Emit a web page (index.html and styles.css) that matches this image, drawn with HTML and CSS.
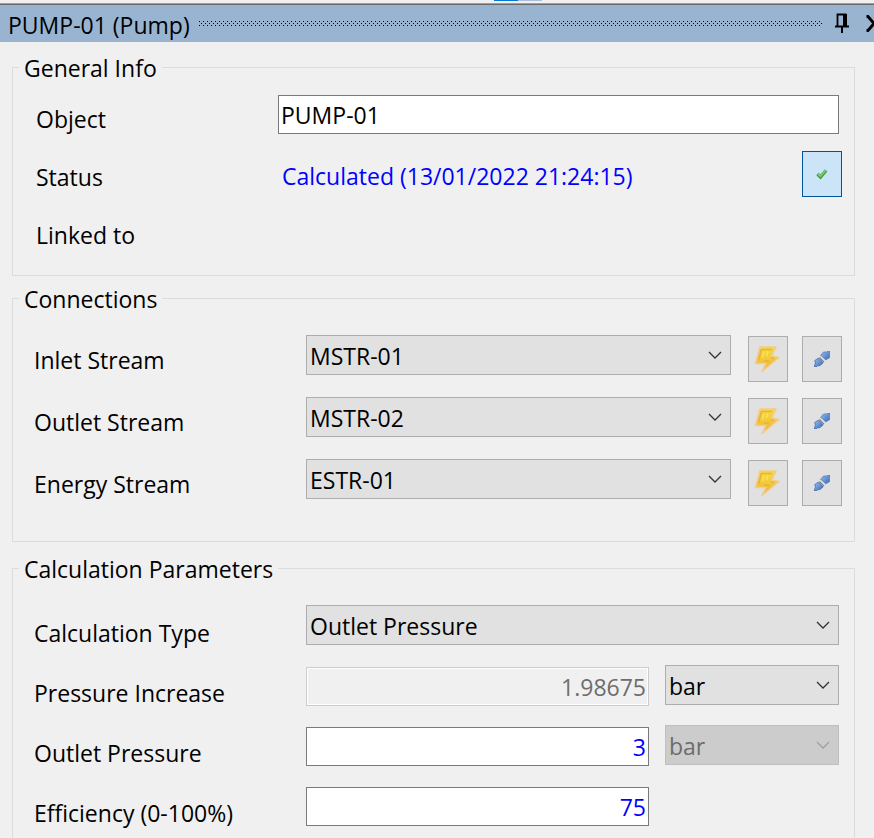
FILE: index.html
```html
<!DOCTYPE html>
<html lang="en">
<head>
    <meta charset="UTF-8">
    <meta name="viewport" content="width=device-width, initial-scale=1.0">
    <title>PUMP-01 (Pump)</title>
    <link rel="stylesheet" href="styles.css">
</head>
<body>
    <svg class="defs" aria-hidden="true">
        <defs>
            <linearGradient id="boltFill" x1="0" y1="0" x2="0" y2="1">
                <stop offset="0" stop-color="#f6da45"/>
                <stop offset="0.5" stop-color="#f2c936"/>
                <stop offset="1" stop-color="#e8a94a"/>
            </linearGradient>
            <linearGradient id="plugFill" x1="0" y1="0" x2="1" y2="1">
                <stop offset="0" stop-color="#9cc0ee"/>
                <stop offset="1" stop-color="#3766b4"/>
            </linearGradient>
            <symbol id="bolt" viewBox="0 0 26 28">
                <path d="M6 2H22L17.500 11L25 12.500L8 26.500L12 18.500H1.500Z" fill="url(#boltFill)" stroke="#f1cc8c" stroke-width="1.600" stroke-linejoin="round"/>
                <path d="M7.500 4L4.500 15M7.500 4.500H18M10 16H15M17 13L20 13.500" stroke="#eab040" stroke-width="1.500" fill="none"/>
                <path d="M10 7L8.500 12.500M14 6.500L12.500 11" stroke="#f8e35c" stroke-width="1.500" fill="none"/>
            </symbol>
            <symbol id="plug" viewBox="0 0 16 16">
                <path d="M6.500 4.500L9.500 1L13 1L14 0H16V2L15.500 3L15.800 6.500L11.500 9Z" fill="url(#plugFill)" stroke="#5280c4" stroke-width="0.800"/>
                <path d="M4.500 7L9 12L6 14.500L3 15L2 16H0.500V14L1.500 13L0.800 9.500Z" fill="url(#plugFill)" stroke="#3f6db4" stroke-width="0.800"/>
                <path d="M5.500 6.500L10 11.200" stroke="#858585" stroke-width="1.600"/>
                <path d="M6.500 5.300L11.200 10" stroke="#e8e8e8" stroke-width="1.200"/>
            </symbol>
        </defs>
    </svg>

    <div class="panel">
        <div class="tab-strip"><span class="tab-active"></span><span class="tab-next"></span></div>

        <header class="title-bar">
            <h1>PUMP-01 (Pump)</h1>
            <div class="grip"></div>
            <button type="button" class="title-btn" aria-label="Auto hide">
                <svg width="16" height="22" viewBox="0 0 16 22">
                    <path d="M3.500 14V1.500H11.500V14" fill="none" stroke="#000" stroke-width="1.800"/>
                    <path d="M9 1H13V13H9ZM1 12.500H15V14.500H1ZM7 14H9V20H7Z" fill="#000"/>
                </svg>
            </button>
            <button type="button" class="title-btn close-btn" aria-label="Close">
                <svg width="16" height="18" viewBox="0 0 16 18">
                    <path d="M0.500 1.500H2L14 15.500H15.500M15.500 1.500H14L2 15.500H0.500" fill="none" stroke="#000" stroke-width="2.800"/>
                </svg>
            </button>
        </header>

        <form class="content">
            <fieldset class="general">
                <legend>General Info</legend>
                <div class="row">
                    <label for="object">Object</label>
                    <input type="text" id="object" value="PUMP-01">
                </div>
                <div class="row">
                    <span class="label">Status</span>
                    <output class="status">Calculated (13/01/2022 21:24:15)</output>
                    <button type="button" class="icon-btn active" aria-label="Object active">
                        <svg width="12" height="12" viewBox="0 0 12 12">
                            <path d="M1.500 6L4.500 9L10 2.500" fill="none" stroke="#3f9a3a" stroke-width="3.400"/>
                            <path d="M1.500 5.500L4.500 8.200L9.800 2.200" fill="none" stroke="#7cc873" stroke-width="1.800"/>
                        </svg>
                    </button>
                </div>
                <div class="row">
                    <span class="label">Linked to</span>
                </div>
            </fieldset>

            <fieldset class="connections">
                <legend>Connections</legend>
                <div class="row">
                    <label for="inlet">Inlet Stream</label>
                    <div class="select"><select id="inlet"><option>MSTR-01</option></select><svg class="arrow" viewBox="0 0 14 8"><path d="M1 1L7 7L13 1"/></svg></div>
                    <button type="button" class="icon-btn" aria-label="Create inlet stream"><svg width="26" height="28"><use href="#bolt"/></svg></button>
                    <button type="button" class="icon-btn" aria-label="Disconnect inlet stream"><svg width="16" height="16"><use href="#plug"/></svg></button>
                </div>
                <div class="row">
                    <label for="outlet">Outlet Stream</label>
                    <div class="select"><select id="outlet"><option>MSTR-02</option></select><svg class="arrow" viewBox="0 0 14 8"><path d="M1 1L7 7L13 1"/></svg></div>
                    <button type="button" class="icon-btn" aria-label="Create outlet stream"><svg width="26" height="28"><use href="#bolt"/></svg></button>
                    <button type="button" class="icon-btn" aria-label="Disconnect outlet stream"><svg width="16" height="16"><use href="#plug"/></svg></button>
                </div>
                <div class="row">
                    <label for="energy">Energy Stream</label>
                    <div class="select"><select id="energy"><option>ESTR-01</option></select><svg class="arrow" viewBox="0 0 14 8"><path d="M1 1L7 7L13 1"/></svg></div>
                    <button type="button" class="icon-btn" aria-label="Create energy stream"><svg width="26" height="28"><use href="#bolt"/></svg></button>
                    <button type="button" class="icon-btn" aria-label="Disconnect energy stream"><svg width="16" height="16"><use href="#plug"/></svg></button>
                </div>
            </fieldset>

            <fieldset class="parameters">
                <legend>Calculation Parameters</legend>
                <div class="row">
                    <label for="calcType">Calculation Type</label>
                    <div class="select"><select id="calcType"><option>Outlet Pressure</option></select><svg class="arrow" viewBox="0 0 14 8"><path d="M1 1L7 7L13 1"/></svg></div>
                </div>
                <div class="row">
                    <label for="increase">Pressure Increase</label>
                    <input type="text" id="increase" class="value" value="1.98675" disabled>
                    <div class="select unit"><select aria-label="Pressure increase unit"><option>bar</option></select><svg class="arrow" viewBox="0 0 14 8"><path d="M1 1L7 7L13 1"/></svg></div>
                </div>
                <div class="row">
                    <label for="pressure">Outlet Pressure</label>
                    <input type="text" id="pressure" class="value" value="3">
                    <div class="select unit"><select aria-label="Outlet pressure unit" disabled><option>bar</option></select><svg class="arrow" viewBox="0 0 14 8"><path d="M1 1L7 7L13 1"/></svg></div>
                </div>
                <div class="row">
                    <label for="efficiency">Efficiency (0-100%)</label>
                    <input type="text" id="efficiency" class="value" value="75">
                    <div class="unit"></div>
                </div>
            </fieldset>
        </form>
    </div>
</body>
</html>
```
FILE: styles.css
```css
* {
    margin: 0;
    padding: 0;
    box-sizing: border-box;
}

body {
    font-family: 'Segoe UI', 'Open Sans', 'Noto Sans', sans-serif;
    font-size: 23px;
    line-height: 32px;
    color: #000;
    background: #f0f0f0;
}

input, select, button {
    font: inherit;
    color: inherit;
}

.defs {
    position: absolute;
    width: 0;
    height: 0;
}

.panel {
    height: 100vh;
    overflow: hidden;
}

.tab-strip {
    display: flex;
    height: 4px;
    padding-left: 494px;
    border-bottom: 1px solid #a0a0a0;
}

.tab-strip span {
    width: 24px;
    height: 1px;
}

.tab-active {
    background: #0078d7;
}

.tab-next {
    background: #a9bfe0;
}

/* Title bar */
.title-bar {
    display: flex;
    align-items: center;
    height: 38px;
    padding-left: 8px;
    background: #99b4d1;
    border-top: 1px solid #696969;
}

.title-bar h1 {
    padding-top: 2px;
    font-size: 23px;
    font-weight: normal;
}

/* dotted drag handle */
.grip {
    flex: 1;
    height: 5px;
    margin: 0 12px 0 9px;
    background-image:
        conic-gradient(from 0deg at 1px 1px, transparent 75%, #000 0),
        conic-gradient(from 0deg at 1px 1px, transparent 75%, #000 0);
    background-size: 4px 4px;
    background-position: 0 0, 2px 2px;
}

.title-btn {
    display: flex;
    width: 16px;
    margin-right: 16px;
    background: none;
    border: none;
}

.close-btn {
    margin-right: -8px;
}

/* Groups */
.content {
    padding: 8px 19px 0 12px;
}

fieldset {
    min-width: 0;
    padding: 0 12px 0 6px;
    border: 1px solid #dcdcdc;
}

legend {
    padding: 2px 5px 0;
}

.row {
    display: flex;
    align-items: center;
}

.row label, .row .label {
    flex: none;
    padding: 9px 0 0 15px;
}

.general {
    height: 226px;
    margin-bottom: 5px;
    padding-top: 1px;
}

.general .row {
    height: 58px;
}

.general .row label, .general .row .label {
    width: 259px;
    padding-left: 17px;
}

.general input {
    margin-right: 3px;
}

.connections {
    height: 261px;
    margin-bottom: 9px;
    padding-top: 20px;
}

.connections .row {
    align-items: flex-start;
    height: 62px;
}

.connections label, .parameters label {
    width: 287px;
}

.parameters {
    height: 400px;
    padding-top: 10px;
    padding-right: 15px;
}

.parameters .row {
    height: 60px;
}

.parameters .row label {
    padding-top: 16px;
}

/* Controls */
input {
    flex: 1;
    min-width: 0;
    height: 39px;
    padding: 1px 2px 0;
    background: #fff;
    border: 1px solid #7a7a7a;
}

.value {
    margin-top: 2px;
    color: #00f;
    text-align: right;
}

input:disabled {
    color: #6d6d6d;
    background: #f0f0f0;
    border-color: #ccc;
    box-shadow: inset 0 0 0 1px #fff;
}

.status {
    flex: 1;
    padding: 8px 0 0 4px;
    color: #00f;
}

.select {
    position: relative;
    flex: 1;
    min-width: 0;
    height: 40px;
}

.select select {
    width: 100%;
    height: 40px;
    padding: 2px 30px 0 3px;
    appearance: none;
    background: #e1e1e1;
    border: 1px solid #adadad;
    border-radius: 0;
}

.select select:disabled {
    color: #6d6d6d;
    background: #ccc;
    border-color: #bfbfbf;
    opacity: 1;
}

.arrow {
    position: absolute;
    top: 16px;
    right: 9px;
    width: 14px;
    height: 8px;
    fill: none;
    stroke: #333;
    stroke-width: 1.3;
    pointer-events: none;
}

select:disabled + .arrow {
    stroke: #a0a0a0;
}

.unit {
    flex: none;
    width: 174px;
    margin-left: 16px;
}

.icon-btn {
    display: flex;
    align-items: center;
    justify-content: center;
    flex: none;
    width: 40px;
    height: 46px;
    margin: 1px 0 0 14px;
    background: #e1e1e1;
    border: 1px solid #adadad;
}

.select + .icon-btn {
    padding-right: 2px;
    margin-left: 17px;
}

.icon-btn.active {
    margin-top: 4px;
    background: #cce4f7;
    border-color: #005499;
}
```
